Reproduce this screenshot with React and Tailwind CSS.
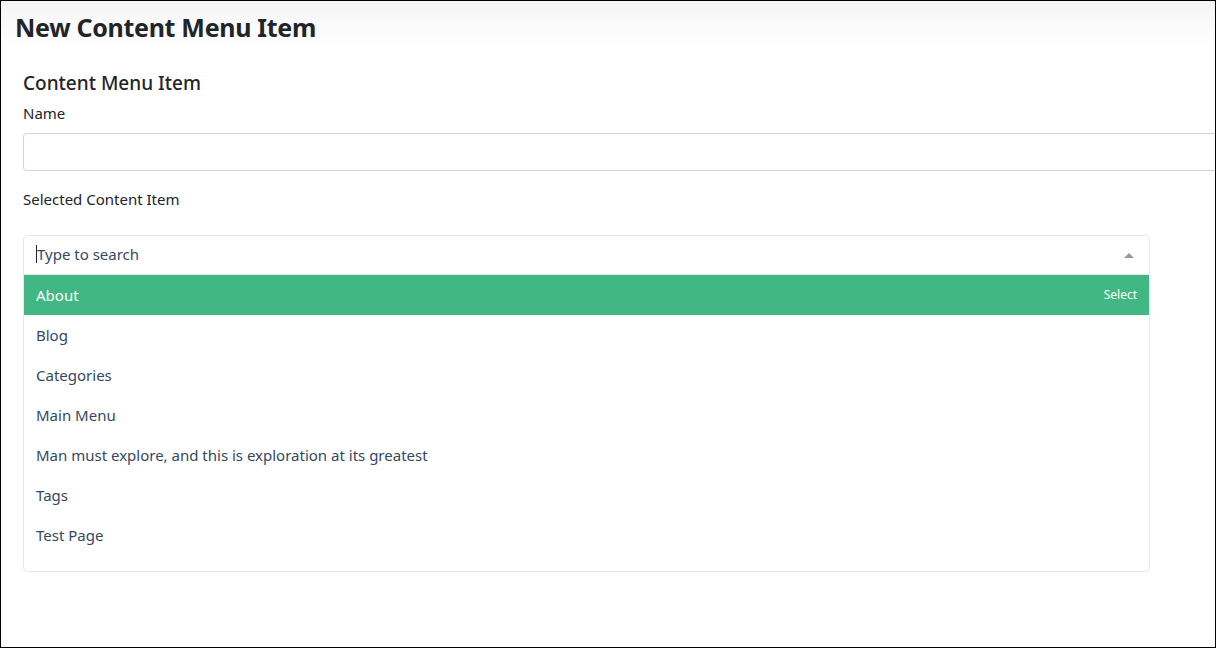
import React from 'react';

const OPTIONS = [
  'About',
  'Blog',
  'Categories',
  'Main Menu',
  'Man must explore, and this is exploration at its greatest',
  'Tags',
  'Test Page',
];

export default function App() {
  return (
    <div
      className="w-[1216px] h-[648px] overflow-hidden border border-black bg-white text-[#212529]"
      style={{ fontFamily: '"Noto Sans", "Open Sans", sans-serif' }}
    >
      {/* Header strip */}
      <div className="h-[48px] bg-gradient-to-b from-[#f5f5f5] to-white pl-[14px] pt-[8px]">
        <h1 className="text-[25px] leading-[36px] font-bold tracking-[-0.3px]">New Content Menu Item</h1>
      </div>

      <div className="pl-[22px] pt-[20px]">
        <h2 className="text-[19px] leading-[28px] font-medium">Content Menu Item</h2>

        <label className="block mt-[5px] text-[15px] leading-[22px]">Name</label>
        <div className="mt-[9px] h-[38px] w-[1230px] rounded-[4px] border border-[#ced4da]" />

        <label className="block mt-[17px] text-[15px] leading-[22px]">Selected Content Item</label>

        {/* Multiselect */}
        <div className="mt-[25px] w-[1127px] rounded-[5px] border border-[#e8e8e8] pb-[16px] text-[#35495e]">
          <div className="relative flex h-[39px] items-center border-b border-[#e8e8e8] pl-[12px] pb-[2px]">
            <span className="h-[18px] w-px bg-[#222]" />
            <span className="text-[15px] text-[#35495e]">Type to search</span>
            <svg className="absolute right-[15px] top-[17px]" width="10" height="5" viewBox="0 0 10 5">
              <path d="M0 5 L5 0 L10 5 Z" fill="#999" />
            </svg>
          </div>
          {OPTIONS.map((opt, i) => (
            <div
              key={opt}
              className={`flex h-[40px] items-center justify-between px-[12px] text-[15px] ${
                i === 0 ? 'bg-[#41b883] text-white' : ''
              }`}
            >
              <span>{opt}</span>
              {i === 0 && <span className="text-[12px]">Select</span>}
            </div>
          ))}
        </div>
      </div>
    </div>
  );
}
